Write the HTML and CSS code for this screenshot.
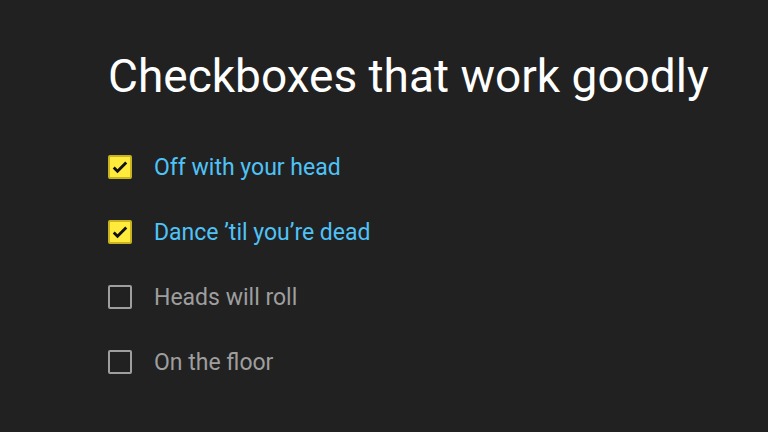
FILE: index.html
```html
<!DOCTYPE html>
<html>
<head>
<meta charset="utf-8">
<link rel="stylesheet" href="styles.css">
</head>
<body>
<main class="page">
  <h1 class="title">Checkboxes that work goodly</h1>
  <ul class="list">
    <li class="item checked">
      <span class="box"><svg viewBox="0 0 24 24" width="20" height="20"><path d="M4.5 12.5L9 17L19.5 6.5" fill="none" stroke="#111" stroke-width="3.4"/></svg></span>
      <span class="label">Off with your head</span>
    </li>
    <li class="item checked">
      <span class="box"><svg viewBox="0 0 24 24" width="20" height="20"><path d="M4.5 12.5L9 17L19.5 6.5" fill="none" stroke="#111" stroke-width="3.4"/></svg></span>
      <span class="label">Dance ’til you’re dead</span>
    </li>
    <li class="item">
      <span class="box"></span>
      <span class="label">Heads will roll</span>
    </li>
    <li class="item">
      <span class="box"></span>
      <span class="label">On the floor</span>
    </li>
  </ul>
</main>
</body>
</html>
```
FILE: styles.css
```css
html, body {
  margin: 0;
  padding: 0;
  background: #212121;
  height: 100%;
}
body {
  font-family: Roboto, "Noto Sans", sans-serif;
}
.page {
  padding: 49px 0 0 108px;
}
.title {
  margin: 0;
  font-size: 46px;
  font-weight: 400;
  color: #ffffff;
  line-height: 54px;
}
.list {
  list-style: none;
  margin: 52px 0 0 0;
  padding: 0;
  display: flex;
  flex-direction: column;
  gap: 41px;
}
.item {
  display: flex;
  align-items: center;
  gap: 22px;
  height: 24px;
}
.box {
  box-sizing: border-box;
  width: 24px;
  height: 24px;
  border: 2px solid #9e9e9e;
  border-radius: 2px;
  display: flex;
  align-items: center;
  justify-content: center;
}
.checked .box {
  background: #ffeb3b;
  border-color: #c8b420;
}
.label {
  font-size: 23px;
  color: #9e9e9e;
}
.checked .label {
  color: #4fc3f7;
}
```
